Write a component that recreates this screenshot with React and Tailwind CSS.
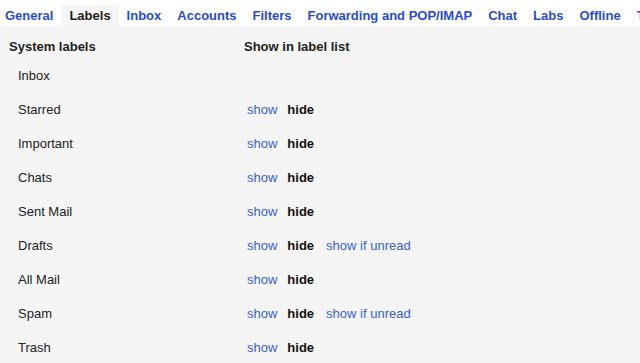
const TABS = [
  'General',
  'Labels',
  'Inbox',
  'Accounts',
  'Filters',
  'Forwarding and POP/IMAP',
  'Chat',
  'Labs',
  'Offline',
  'Themes',
];

const ROWS = [
  { name: 'Inbox', opts: false },
  { name: 'Starred', opts: true },
  { name: 'Important', opts: true },
  { name: 'Chats', opts: true },
  { name: 'Sent Mail', opts: true },
  { name: 'Drafts', opts: true, unread: true },
  { name: 'All Mail', opts: true },
  { name: 'Spam', opts: true, unread: true },
  { name: 'Trash', opts: true },
];

export default function App() {
  return (
    <div className="h-[363px] w-[640px] overflow-hidden bg-[#f5f5f5] font-['Liberation_Sans',Arial,sans-serif] text-[13px] leading-4 text-[#222]">
      <nav className="flex h-[26px] items-end overflow-hidden whitespace-nowrap bg-white pl-[5px]">
        {TABS.map((tab, i) => (
          <div
            key={tab}
            className={`flex h-[21px] shrink-0 items-center font-bold ${i === 0 ? 'pr-2' : 'px-2'} ${
              tab === 'Labels' ? 'bg-[#f5f5f5] text-[#222]' : tab === 'Themes' ? 'text-[#7b2fc9]' : 'text-[#2b4bc8]'
            }`}
          >
            {tab}
          </div>
        ))}
      </nav>

      <div className="flex h-[33px] items-start pl-[9px] pt-[13px] font-bold">
        <div className="w-[235px]">System labels</div>
        <div>Show in label list</div>
      </div>

      {ROWS.map((row) => (
        <div key={row.name} className="flex h-[34px] items-center pl-[18px]">
          <div className="w-[229px]">{row.name}</div>
          {row.opts && (
            <div className="flex items-center">
              <span className="mr-[10px] text-[#3a5fcd]">show</span>
              <span className="font-bold text-[#111]">hide</span>
              {row.unread && <span className="ml-[12px] text-[#3a5fcd]">show if unread</span>}
            </div>
          )}
        </div>
      ))}
    </div>
  );
}
